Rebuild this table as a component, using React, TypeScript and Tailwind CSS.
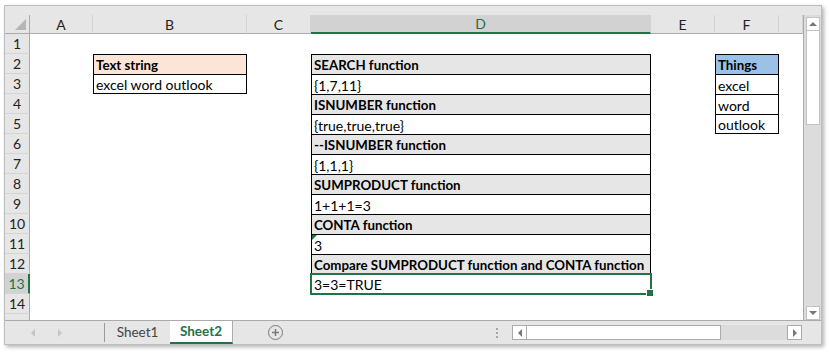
import React from 'react';

const COLS = ['A', 'B', 'C', 'D', 'E', 'F', 'G'];
const SEL_COL = 'D';
const SEL_ROW = 13;

type CellDef = { text: string; cls: string; flag?: boolean; selected?: boolean };

const dRows: [number, string][] = [
  [2, 'SEARCH function'],
  [3, '{1,7,11}'],
  [4, 'ISNUMBER function'],
  [5, '{true,true,true}'],
  [6, '--ISNUMBER function'],
  [7, '{1,1,1}'],
  [8, 'SUMPRODUCT function'],
  [9, '1+1+1=3'],
  [10, 'CONTA function'],
  [11, '3'],
  [12, 'Compare SUMPRODUCT function and CONTA function'],
  [13, '3=3=TRUE'],
];

const BOLD = 'font-bold text-[13.3px]';
const REG = 'text-[14px]';

const cells: Record<string, CellDef> = {
  B2: { text: 'Text string', cls: `${BOLD} bg-[#fce4d6] border-x border-t border-black` },
  B3: { text: 'excel word outlook', cls: `${REG} border border-black` },
  F2: { text: 'Things', cls: `${BOLD} bg-[#9bc2e6] border-x border-t border-black` },
  F3: { text: 'excel', cls: `${REG} border-x border-t border-black` },
  F4: { text: 'word', cls: `${REG} border-x border-t border-black` },
  F5: { text: 'outlook', cls: `${REG} border border-black` },
};

dRows.forEach(([r, text]) => {
  const header = r % 2 === 0;
  const last = r === 13;
  cells['D' + r] = {
    text,
    cls: `${header ? `${BOLD} bg-[#e7e6e6]` : REG} ${last ? 'border border-black' : 'border-x border-t border-black'}`,
    flag: r === 11,
    selected: r === SEL_ROW,
  };
});

const ColHeader: React.FC<{ name: string }> = ({ name }) => {
  const sel = name === SEL_COL;
  return (
    <div
      className={`flex items-center justify-center border-r border-r-[#d4d4d4] text-[14px] ${
        sel
          ? 'bg-[#d2d2d2] text-[#217346] border-b-2 border-b-[#217346]'
          : 'bg-[#e6e6e6] text-[#222] border-b border-b-[#ababab]'
      }`}
    >
      {name === 'G' ? '' : name}
    </div>
  );
};

const RowHeader: React.FC<{ n: number }> = ({ n }) => {
  const sel = n === SEL_ROW;
  return (
    <div
      className={`flex items-center justify-center border-b border-b-[#d4d4d4] text-[14px] ${
        sel
          ? 'bg-[#d2d2d2] text-[#217346] border-r-2 border-r-[#217346]'
          : 'bg-[#e6e6e6] text-[#222] border-r border-r-[#ababab]'
      }`}
    >
      {n}
    </div>
  );
};

const GridCell: React.FC<{ id: string }> = ({ id }) => {
  const c = cells[id];
  if (!c) return <div className="bg-white" />;
  return (
    <div className={`relative flex items-end pl-[2px] leading-[17px] text-black whitespace-nowrap ${c.cls}`}>
      {c.flag && (
        <div className="absolute left-0 top-0 w-0 h-0 border-t-[5px] border-t-[#217346] border-r-[5px] border-r-transparent" />
      )}
      {c.text}
      {c.selected && (
        <>
          <div className="absolute -left-[2px] -top-[2px] -right-[2px] -bottom-[2px] border-2 border-[#217346]" />
          <div className="absolute -right-[4px] -bottom-[4px] w-[6px] h-[6px] bg-[#217346] border border-white box-content" />
        </>
      )}
    </div>
  );
};

const Tri: React.FC<{ dir: 'left' | 'right' | 'up' | 'down'; color: string }> = ({ dir, color }) => {
  const pts = {
    left: '5,0 5,8 1,4',
    right: '1,0 1,8 5,4',
    up: '0,5 8,5 4,1',
    down: '0,1 8,1 4,5',
  }[dir];
  const vb = dir === 'left' || dir === 'right' ? '0 0 6 8' : '0 0 8 6';
  const size = dir === 'left' || dir === 'right' ? 'w-[6px] h-[8px]' : 'w-[8px] h-[6px]';
  return (
    <svg viewBox={vb} className={size}>
      <polygon points={pts} fill={color} />
    </svg>
  );
};

export default function App() {
  return (
    <div className="w-[829px] h-[354px] bg-white pl-[4px] pt-[5px] font-[Lato,sans-serif]">
      <div className="w-[818px] h-[340px] border border-[#bdbdbd] bg-[#e6e6e6] shadow-[2px_2px_4px_rgba(0,0,0,0.3)] flex flex-col">
        <div className="h-[9px] shrink-0" />
        <div className="flex h-[305px] shrink-0">
          <div className="grid grid-cols-[25px_63px_154px_64px_340px_64px_64px_24px] grid-rows-[19px_repeat(14,20px)_6px] w-[798px] bg-white overflow-hidden">
            <div className="relative bg-[#e6e6e6] border-r border-b border-[#ababab]">
              <svg viewBox="0 0 11 11" className="absolute right-[3px] bottom-[3px] w-[11px] h-[11px]">
                <polygon points="11,0 11,11 0,11" fill="#b6b6b6" />
              </svg>
            </div>
            {COLS.map((c) => (
              <ColHeader key={c} name={c} />
            ))}
            {Array.from({ length: 14 }, (_, i) => i + 1).map((r) => (
              <React.Fragment key={r}>
                <RowHeader n={r} />
                {COLS.map((c) => (
                  <GridCell key={c + r} id={c + r} />
                ))}
              </React.Fragment>
            ))}
            <div className="bg-[#e6e6e6] border-r border-[#ababab]" />
            <div className="col-span-7 bg-white" />
          </div>
          <div className="w-[18px] border-l border-[#ababab] bg-[#dcdcdc] flex flex-col pt-[2px] pl-[2px] pr-[1px]">
            <div className="h-[14px] bg-white border border-[#c2c2c2] flex items-center justify-center">
              <Tri dir="up" color="#777" />
            </div>
            <div className="h-[94px] bg-white border-x border-b border-[#c2c2c2]" />
            <div className="flex-1" />
            <div className="h-[14px] bg-white border border-[#c2c2c2] flex items-center justify-center">
              <Tri dir="down" color="#777" />
            </div>
          </div>
        </div>
        <div className="flex-1 flex border-t border-[#ababab] bg-[#e6e6e6] text-[13.5px]">
          <div className="w-[99px] flex items-center pl-[25px] gap-[21px]">
            <Tri dir="left" color="#c4c4c4" />
            <Tri dir="right" color="#c4c4c4" />
          </div>
          <div className="w-px my-[2px] bg-[#9a9a9a]" />
          <div className="w-[65px] flex items-center justify-center text-[#444]">Sheet1</div>
          <div className="w-[63px] flex items-center justify-center bg-white border-r border-[#ababab] border-b-2 border-b-[#217346] text-[#217346] font-bold">
            Sheet2
          </div>
          <div className="w-[35px]" />
          <div className="flex items-center">
            <div className="w-[15px] h-[15px] rounded-full border-[1.5px] border-[#7a7a7a] flex items-center justify-center">
              <svg viewBox="0 0 9 9" className="w-[9px] h-[9px]">
                <path d="M4.5 1v7M1 4.5h7" stroke="#7a7a7a" strokeWidth="1.5" />
              </svg>
            </div>
          </div>
          <div className="w-[213px]" />
          <div className="flex flex-col items-center justify-center gap-[2px]">
            <div className="w-[2px] h-[2px] bg-[#a6a6a6]" />
            <div className="w-[2px] h-[2px] bg-[#a6a6a6]" />
            <div className="w-[2px] h-[2px] bg-[#a6a6a6]" />
          </div>
          <div className="w-[14px]" />
          <div className="flex items-center">
            <div className="w-[290px] h-[15px] flex">
              <div className="w-[15px] bg-white border border-[#ababab] flex items-center justify-center">
                <Tri dir="left" color="#777" />
              </div>
              <div className="w-[194px] bg-white border-y border-r border-[#ababab]" />
              <div className="flex-1 bg-[#dcdcdc]" />
              <div className="w-[15px] bg-white border border-[#ababab] flex items-center justify-center">
                <Tri dir="right" color="#777" />
              </div>
            </div>
          </div>
        </div>
      </div>
    </div>
  );
}
